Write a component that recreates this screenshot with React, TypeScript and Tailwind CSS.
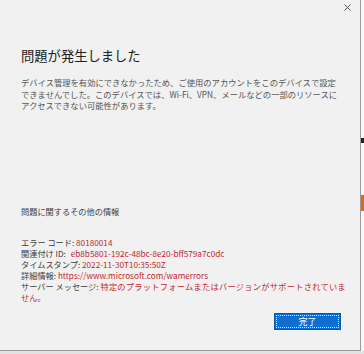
import React from 'react';

const jp = "font-['Noto_Sans_CJK_JP','Noto_Sans',sans-serif]";

function InfoLine({ label, value, gap = '' }: { label: string; value: React.ReactNode; gap?: string }) {
  return (
    <div className="whitespace-nowrap">
      <span className="text-[#3c3c3c]">{label}</span>
      <span className={`text-[#c4262e] ${gap}`}>{value}</span>
    </div>
  );
}

export default function App() {
  return (
    <div className={`w-[364px] h-[354px] flex flex-col bg-[#e4e4e4] overflow-hidden ${jp}`}>
      <div className="flex h-[351px]">
        {/* Dialog */}
        <div className="w-[361px] h-full bg-[#f1f1f1] border-r border-b border-[#9a9a9a] flex flex-col">
          <div className="flex justify-end pt-[4px] pr-[9px] h-[14px]">
            <svg width="7" height="7" viewBox="0 0 7 7" className="text-[#555]">
              <path d="M0.5 0.5 L6.5 6.5 M6.5 0.5 L0.5 6.5" stroke="currentColor" strokeWidth="1" />
            </svg>
          </div>

          <div className="px-[21px] flex flex-col">
            <h1 className="mt-[34px] text-[13.3px] leading-[16px] text-[#202020] font-normal whitespace-nowrap">
              問題が発生しました
            </h1>

            <div className="mt-[13px] text-[8.3px] leading-[11.7px] text-[#555]">
              <div className="whitespace-nowrap">デバイス管理を有効にできなかったため、ご使用のアカウントをこのデバイスで設定</div>
              <div className="whitespace-nowrap">できませんでした。このデバイスでは、Wi-Fi、VPN、メールなどの一部のリソースに</div>
              <div className="whitespace-nowrap">アクセスできない可能性があります。</div>
            </div>

            <div className="mt-[94px] text-[8.2px] leading-[11px] text-[#3c3c3c] whitespace-nowrap">
              問題に関するその他の情報
            </div>

            <div className="mt-[20px] text-[8.2px] leading-[11px]">
              <InfoLine label="エラー コード: " value="80180014" />
              <InfoLine label="関連付け ID: " value="eb8b5801-192c-48bc-8e20-bff579a7c0dc" gap="ml-[3px]" />
              <InfoLine label="タイムスタンプ: " value="2022-11-30T10:35:50Z" />
              <InfoLine label="詳細情報: " value="https://www.microsoft.com/wamerrors" />
              <div className="whitespace-nowrap">
                <span className="text-[#3c3c3c]">サーバー メッセージ: </span>
                <span className="text-[#c4262e] tracking-[0.3px]">特定のプラットフォームまたはバージョンがサポートされていま</span>
              </div>
              <div className="text-[#c4262e]">せん。</div>
            </div>

            <div className="mt-[10px] flex justify-end">
              <button className="mr-[-2px] w-[67px] h-[17px] bg-[#0f6fd0] border border-[#0a58a8] p-[1px]">
                <div className="w-full h-full border border-dotted border-[#d8e8ff] flex items-center justify-center text-white text-[9px] leading-none">
                  完了
                </div>
              </button>
            </div>
          </div>
        </div>

        {/* Behind the dialog, right edge */}
        <div className="flex-1 bg-[#f7f7f7] flex flex-col">
          <div className="h-[138px]" />
          <div className="h-[5px] bg-[#222]" />
          <div className="h-[52px]" />
          <div className="h-[16px] bg-[#d86a1a]" />
        </div>
      </div>
      <div className="flex-1 bg-[#e2e2e2]" />
    </div>
  );
}
